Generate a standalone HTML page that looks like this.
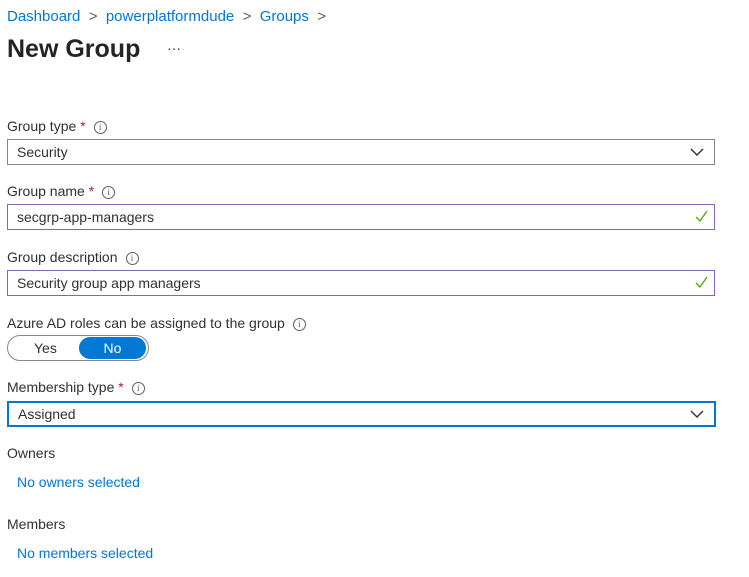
<!DOCTYPE html>
<html><head><style>
body{margin:0;width:749px;height:577px;background:#fff;font-family:"Liberation Sans",sans-serif;color:#323130;position:relative;overflow:hidden}
.a{position:absolute;white-space:nowrap}
.lbl{font-size:14px;color:#323130}
.st{color:#a4262c}
.i{display:inline-block;width:11px;height:11px;border:1px solid #605e5c;border-radius:50%;font-size:9px;line-height:11px;text-align:center;color:#605e5c;vertical-align:1px;margin-left:8px;font-family:"Liberation Serif",serif}
.box{position:absolute;left:7px;width:706px;height:24px;border:1px solid #8a8886;font-size:14px;line-height:24px;padding-left:9px;box-sizing:content-box}
.link{color:#0078d4;font-size:14px}
.chk{position:absolute;right:6px;top:5px}
</style></head><body>
<div class="a link" style="left:7px;top:8px;font-size:15px">Dashboard <span style="color:#605e5c">&nbsp;&gt;&nbsp;</span> powerplatformdude <span style="color:#605e5c">&nbsp;&gt;&nbsp;</span> Groups <span style="color:#605e5c">&nbsp;&gt;</span></div>
<div class="a" style="left:7px;top:35px;font-size:25px;font-weight:600;color:#252423">New Group</div>
<div class="a" style="left:167px;top:40px;font-size:14px;color:#323130">···</div>

<div class="a lbl" style="left:7px;top:118px">Group type <span class="st">*</span><span class="i">i</span></div>
<div class="box" style="top:139px;width:697px">Security<svg class="a" style="right:10px;top:8px" width="14" height="8"><path d="M1 1L7 7L13 1" fill="none" stroke="#323130" stroke-width="1.4"/></svg></div>

<div class="a lbl" style="left:7px;top:183px">Group name <span class="st">*</span><span class="i">i</span></div>
<div class="box" style="top:204px;width:697px;border-color:#8764b8">secgrp-app-managers<svg class="chk" width="13" height="12"><path d="M1 7L5 11L12 1" fill="none" stroke="#57a300" stroke-width="1.3"/></svg></div>

<div class="a lbl" style="left:7px;top:249px">Group description<span class="i">i</span></div>
<div class="box" style="top:270px;width:697px;border-color:#8764b8">Security group app managers<svg class="chk" width="13" height="12"><path d="M1 7L5 11L12 1" fill="none" stroke="#57a300" stroke-width="1.3"/></svg></div>

<div class="a lbl" style="left:7px;top:315px">Azure AD roles can be assigned to the group<span class="i">i</span></div>
<div class="a" style="left:7px;top:335px;width:140px;height:24px;border:1px solid #8a8886;border-radius:13px"></div>
<div class="a" style="left:34px;top:340px;font-size:14px">Yes</div>
<div class="a" style="left:79px;top:337px;width:67px;height:22px;background:#0078d4;border-radius:11px;color:#fff;font-size:14px;line-height:22px;text-align:center">No</div>

<div class="a lbl" style="left:7px;top:379px">Membership type <span class="st">*</span><span class="i">i</span></div>
<div class="box" style="top:401px;width:696px;height:22px;line-height:22px;border:2px solid #0078d4;left:7px">Assigned<svg class="a" style="right:10px;top:7px" width="14" height="8"><path d="M1 1L7 7L13 1" fill="none" stroke="#323130" stroke-width="1.4"/></svg></div>

<div class="a lbl" style="left:7px;top:445px">Owners</div>
<div class="a link" style="left:17px;top:474px">No owners selected</div>
<div class="a lbl" style="left:7px;top:516px">Members</div>
<div class="a link" style="left:17px;top:545px">No members selected</div>
</body></html>
